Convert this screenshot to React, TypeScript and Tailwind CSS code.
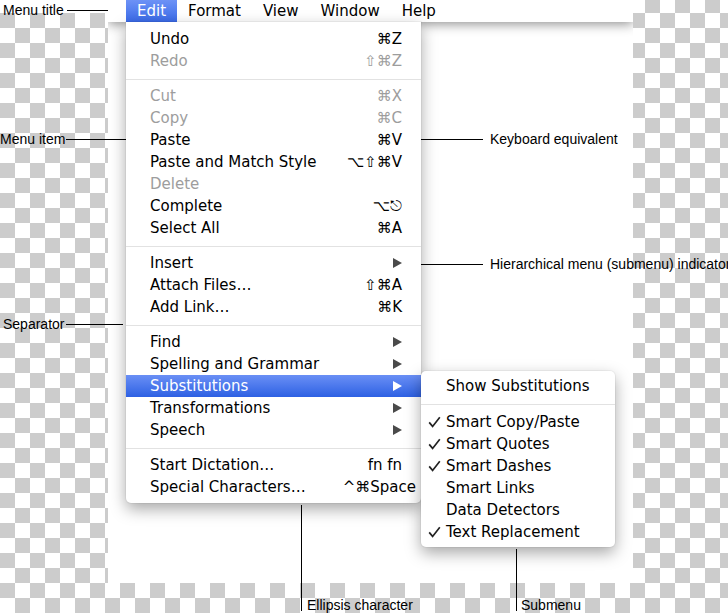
import React from "react";

type MenuItem = {
  label: string;
  keys?: string;
  disabled?: boolean;
  submenu?: boolean;
  active?: boolean;
  overhang?: boolean;
};

const menuBar = ["Edit", "Format", "View", "Window", "Help"];

const editMenu: MenuItem[][] = [
  [
    { label: "Undo", keys: "⌘Z" },
    { label: "Redo", keys: "⇧⌘Z", disabled: true },
  ],
  [
    { label: "Cut", keys: "⌘X", disabled: true },
    { label: "Copy", keys: "⌘C", disabled: true },
    { label: "Paste", keys: "⌘V" },
    { label: "Paste and Match Style", keys: "⌥⇧⌘V" },
    { label: "Delete", disabled: true },
    { label: "Complete", keys: "⌥⎋" },
    { label: "Select All", keys: "⌘A" },
  ],
  [
    { label: "Insert", submenu: true },
    { label: "Attach Files…", keys: "⇧⌘A" },
    { label: "Add Link…", keys: "⌘K" },
  ],
  [
    { label: "Find", submenu: true },
    { label: "Spelling and Grammar", submenu: true },
    { label: "Substitutions", submenu: true, active: true },
    { label: "Transformations", submenu: true },
    { label: "Speech", submenu: true },
  ],
  [
    { label: "Start Dictation…", keys: "fn fn" },
    { label: "Special Characters…", keys: "^⌘Space", overhang: true },
  ],
];

const substitutions = [
  { label: "Smart Copy/Paste", checked: true },
  { label: "Smart Quotes", checked: true },
  { label: "Smart Dashes", checked: true },
  { label: "Smart Links", checked: false },
  { label: "Data Detectors", checked: false },
  { label: "Text Replacement", checked: true },
];

function SubmenuArrow({ light }: { light?: boolean }) {
  return (
    <svg width="9" height="10" viewBox="0 0 9 10">
      <path d="M0 0L9 5L0 10Z" fill={light ? "#ffffff" : "#4a4a4a"} />
    </svg>
  );
}

function CheckMark() {
  return (
    <svg width="13" height="12" viewBox="0 0 13 12">
      <path d="M1.2 6.4L4.6 10.4L11.8 1.2" fill="none" stroke="#222" strokeWidth="1.7" />
    </svg>
  );
}

function SubstitutionsMenu() {
  return (
    <div className="absolute left-full top-[-4px] z-30 w-[194px] rounded-[5px] bg-white pt-[4px] pb-[4px] text-black shadow-[0_6px_16px_rgba(0,0,0,0.35),0_0_0_1px_rgba(0,0,0,0.04)]">
      <div className="flex h-[22px] items-center pl-[25px]">Show Substitutions</div>
      <div className="pt-[7px] pb-[6px]">
        <div className="h-px bg-[#e2e2e2]" />
      </div>
      {substitutions.map((s) => (
        <div key={s.label} className="flex h-[22px] items-center pl-[7px]">
          <span className="flex w-[18px]">{s.checked && <CheckMark />}</span>
          {s.label}
        </div>
      ))}
    </div>
  );
}

function MenuRow({ item }: { item: MenuItem }) {
  const color = item.active ? "text-white" : item.disabled ? "text-[#9d9d9d]" : "text-black";
  return (
    <div
      className={`relative flex h-[22px] items-center justify-between pl-[24px] pr-[19px] ${color} ${
        item.active ? "bg-gradient-to-b from-[#6a8ff5] to-[#2d60e3]" : ""
      }`}
    >
      <span>{item.label}</span>
      {item.submenu ? (
        <SubmenuArrow light={item.active} />
      ) : item.keys ? (
        <span className={item.overhang ? "-mr-[14px]" : ""}>{item.keys}</span>
      ) : null}
      {item.active && <SubstitutionsMenu />}
    </div>
  );
}

export default function App() {
  return (
    <div className="relative h-[613px] w-[728px] overflow-hidden bg-[image:repeating-conic-gradient(#cccccc_0_25%,#ffffff_0_50%)] bg-[length:30px_30px] bg-[position:15px_13px]">
      <div className="flex items-start">
        <div className="h-[13px] w-[108px] bg-white" />

        {/* menu bar and open Edit menu */}
        <div className="h-[583px] w-[525px] overflow-hidden bg-white font-['DejaVu_Sans',sans-serif] text-[15px] text-black">
          <div className="relative z-10 flex h-[22px] items-center bg-white pl-[18px] shadow-[0_2px_12px_rgba(0,0,0,0.45)]">
            {menuBar.map((title, i) => (
              <div
                key={title}
                className={`flex h-[22px] items-center px-[11px] ${
                  i === 0 ? "bg-gradient-to-b from-[#6d92f6] to-[#3a6ae8] text-white" : ""
                }`}
              >
                {title}
              </div>
            ))}
          </div>

          <div className="relative z-20 ml-[18px] w-[295px] rounded-b-[5px] bg-white pt-[6px] pb-[5px] shadow-[0_6px_16px_rgba(0,0,0,0.35),0_0_0_1px_rgba(0,0,0,0.04)]">
            {editMenu.map((group, gi) => (
              <div key={gi}>
                {gi > 0 && (
                  <div className="pt-[7px] pb-[5px]">
                    <div className="h-px bg-[#e2e2e2]" />
                  </div>
                )}
                {group.map((item) => (
                  <MenuRow key={item.label} item={item} />
                ))}
              </div>
            ))}
          </div>
        </div>
      </div>

      {/* callouts */}
      <div className="font-['Liberation_Sans',Arial,sans-serif] text-[14px] leading-[16px] text-black">
        <div className="absolute left-[3px] top-[2px] flex items-center">
          <span>Menu title</span>
          <span className="ml-[3px] h-px w-[55px] bg-black" />
        </div>
        <div className="absolute left-0 top-[131px] flex items-center">
          <span>Menu item</span>
          <span className="ml-[1px] h-px w-[80px] bg-black" />
        </div>
        <div className="absolute left-[3px] top-[316px] flex items-center">
          <span>Separator</span>
          <span className="ml-[2px] h-px w-[57px] bg-black" />
        </div>
        <div className="absolute left-[405px] top-[131px] flex items-center">
          <span className="mr-[7px] h-px w-[78px] bg-black" />
          <span>Keyboard equivalent</span>
        </div>
        <div className="absolute left-[404px] top-[256px] flex items-center whitespace-nowrap">
          <span className="mr-[7px] h-px w-[79px] bg-black" />
          <span>Hierarchical menu (submenu) indicator</span>
        </div>
        <div className="absolute left-[301px] top-[505px] flex items-end">
          <span className="h-[106px] w-px bg-black" />
          <span className="mb-[-2px] ml-[5px] whitespace-nowrap">Ellipsis character</span>
        </div>
        <div className="absolute left-[516px] top-[549px] flex items-end">
          <span className="h-[62px] w-px bg-black" />
          <span className="mb-[-2px] ml-[4px]">Submenu</span>
        </div>
      </div>
    </div>
  );
}
